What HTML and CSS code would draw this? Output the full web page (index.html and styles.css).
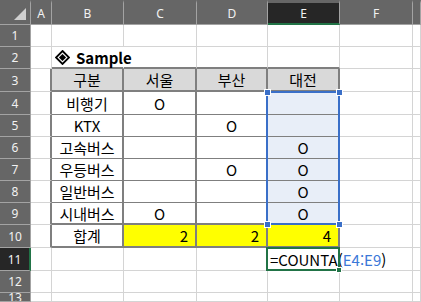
FILE: index.html
```html
<!DOCTYPE html>
<html lang="ko">

<head>
  <meta charset="UTF-8" />
  <title>교통수단 집계</title>
  <link rel="stylesheet" href="styles.css">
</head>

<body>
  <div class="sheet">
    <!-- 열 머리글 -->
    <div class="row">
      <div class="c corner"><svg width="12" height="12" viewBox="0 0 12 12"><polygon points="12,0 12,12 0,12" fill="#cfcfcf" /></svg></div>
      <div class="c col">A</div>
      <div class="c col">B</div>
      <div class="c col">C</div>
      <div class="c col">D</div>
      <div class="c col on">E</div>
      <div class="c col">F</div>
      <div class="c col"></div>
    </div>

    <div class="row">
      <div class="c num">1</div>
      <div class="c"></div><div class="c"></div><div class="c"></div><div class="c"></div><div class="c"></div><div class="c"></div><div class="c"></div>
    </div>

    <div class="row">
      <div class="c num">2</div>
      <div class="c"></div>
      <div class="c edge-t title">
        <svg class="mark" width="15" height="15" viewBox="0 0 15 15">
          <polygon points="7.5,1 14,7.5 7.5,14 1,7.5" fill="#fff" stroke="#000" stroke-width="1.8" />
          <polygon points="7.5,3.9 11.1,7.5 7.5,11.1 3.9,7.5" fill="#000" />
        </svg>Sample
      </div>
      <div class="c edge-t"></div>
      <div class="c edge-t"></div>
      <div class="c edge-t"></div>
      <div class="c"></div><div class="c"></div>
    </div>

    <div class="row">
      <div class="c num">3</div>
      <div class="c edge-l"></div>
      <div class="c t th">구분</div>
      <div class="c t th">서울</div>
      <div class="c t th">부산</div>
      <div class="c t th">대전</div>
      <div class="c"></div><div class="c"></div>
    </div>

    <div class="row">
      <div class="c num">4</div>
      <div class="c edge-l"></div>
      <div class="c t">비행기</div>
      <div class="c t">O</div>
      <div class="c t"></div>
      <div class="c t sel"></div>
      <div class="c"></div><div class="c"></div>
    </div>

    <div class="row">
      <div class="c num">5</div>
      <div class="c edge-l"></div>
      <div class="c t">KTX</div>
      <div class="c t"></div>
      <div class="c t">O</div>
      <div class="c t sel"></div>
      <div class="c"></div><div class="c"></div>
    </div>

    <div class="row">
      <div class="c num">6</div>
      <div class="c edge-l"></div>
      <div class="c t">고속버스</div>
      <div class="c t"></div>
      <div class="c t"></div>
      <div class="c t sel">O</div>
      <div class="c"></div><div class="c"></div>
    </div>

    <div class="row">
      <div class="c num">7</div>
      <div class="c edge-l"></div>
      <div class="c t">우등버스</div>
      <div class="c t"></div>
      <div class="c t">O</div>
      <div class="c t sel">O</div>
      <div class="c"></div><div class="c"></div>
    </div>

    <div class="row">
      <div class="c num">8</div>
      <div class="c edge-l"></div>
      <div class="c t">일반버스</div>
      <div class="c t"></div>
      <div class="c t"></div>
      <div class="c t sel">O</div>
      <div class="c"></div><div class="c"></div>
    </div>

    <div class="row">
      <div class="c num">9</div>
      <div class="c edge-l"></div>
      <div class="c t tb">시내버스</div>
      <div class="c t tb">O</div>
      <div class="c t tb"></div>
      <div class="c t tb sel">O</div>
      <div class="c"></div><div class="c"></div>
    </div>

    <div class="row">
      <div class="c num">10</div>
      <div class="c edge-l"></div>
      <div class="c t tb">합계</div>
      <div class="c t tb sum">2</div>
      <div class="c t tb sum">2</div>
      <div class="c t tb sum">4</div>
      <div class="c"></div><div class="c"></div>
    </div>

    <div class="row">
      <div class="c num on">11</div>
      <div class="c"></div><div class="c"></div><div class="c"></div><div class="c"></div>
      <div class="c active">=COUNTA(<span class="ref">E4:E9</span>)<span class="caret"></span></div>
      <div class="c"></div><div class="c"></div>
    </div>

    <div class="row">
      <div class="c num">12</div>
      <div class="c"></div><div class="c"></div><div class="c"></div><div class="c"></div><div class="c"></div><div class="c"></div><div class="c"></div>
    </div>

    <div class="row">
      <div class="c num">13</div>
      <div class="c"></div><div class="c"></div><div class="c"></div><div class="c"></div><div class="c"></div><div class="c"></div><div class="c"></div>
    </div>

    <!-- 범위 선택 (E4:E9) -->
    <div class="sel-box">
      <span class="grip" style="left: -4px; top: -4px;"></span>
      <span class="grip" style="left: 68px; top: -4px;"></span>
      <span class="grip" style="left: -4px; top: 128px;"></span>
      <span class="grip" style="left: 68px; top: 128px;"></span>
    </div>

    <!-- 활성 셀 (E11) -->
    <div class="cur-box"><span class="fill"></span></div>
  </div>
</body>

</html>
```

FILE: styles.css
```css
body {
  margin: 0;
  background-color: #FFFFFF;
  overflow: hidden;
}

.sheet {
  position: relative;
  display: grid;
  grid-template-columns: 31px 21px 72px 73px 71px 72px 73px 1fr;
  grid-template-rows: 25px 22px 22px 23px 23px 22px 22px 22px 22px 22px 23px 23px 22px 1fr;
  width: 421px;
  height: 302px;
  font-family: "Noto Sans CJK KR", "Noto Sans", sans-serif;
  font-size: 15px;
  color: #000;
}

.row {
  display: contents;
}

/* 기본 셀 + 눈금선 */
.c {
  box-sizing: border-box;
  display: flex;
  align-items: center;
  min-width: 0;
  padding: 0 3px;
  border-right: 1px solid #d4d4d4;
  border-bottom: 1px solid #d4d4d4;
  white-space: nowrap;
  overflow: hidden;
}

/* 머리글 */
.corner,
.col,
.num {
  justify-content: center;
  padding: 0;
  background-color: #666666;
  border-color: #a3a3a3;
  color: #f2f2f2;
  font-family: "Noto Sans", sans-serif;
  font-size: 12px;
}

.corner,
.col {
  border-top: 3px solid #666666;
}

.corner {
  justify-content: flex-end;
  align-items: flex-end;
  padding: 0 4px 4px 0;
}

.col.on {
  background-color: #262626;
  border-bottom: 2px solid #217346;
}

.num.on {
  background-color: #262626;
  border-right: 2px solid #217346;
}

/* 표 테두리 */
.edge-t {
  border-bottom: 2px solid #7f7f7f;
}

.edge-l {
  border-right: 2px solid #7f7f7f;
}

.t {
  justify-content: center;
  border-color: #7f7f7f;
  border-right-width: 2px;
}

.th {
  background-color: #d9d9d9;
  border-bottom-width: 2px;
}

.tb {
  border-bottom-width: 2px;
}

.sel {
  background-color: #e8eef8;
}

.sum {
  justify-content: flex-end;
  padding-right: 7px;
  background-color: #ffff00;
}

.title {
  overflow: visible;
  padding-left: 3px;
  border-right-color: transparent;
  font-weight: bold;
}

.mark {
  flex: none;
  margin-right: 6px;
}

/* 수식 입력 중인 셀 */
.active {
  overflow: visible;
  padding-left: 2px;
}

.ref {
  color: #3b78d8;
}

.caret {
  display: inline-block;
  width: 1px;
  height: 21px;
  margin-left: 2px;
  background-color: #000;
}

.sel-box {
  position: absolute;
  left: 266px;
  top: 91px;
  width: 74px;
  height: 134px;
  box-sizing: border-box;
  border: 2px solid #3a6fc8;
}

.grip {
  position: absolute;
  width: 5px;
  height: 5px;
  background-color: #3a6fc8;
  border: 1px solid #fff;
}

.cur-box {
  position: absolute;
  left: 266px;
  top: 247px;
  width: 74px;
  height: 24px;
  box-sizing: border-box;
  border: 2px solid #217346;
}

.fill {
  position: absolute;
  left: 68px;
  top: 18px;
  width: 4px;
  height: 4px;
  background-color: #217346;
  border: 1px solid #fff;
}
```
